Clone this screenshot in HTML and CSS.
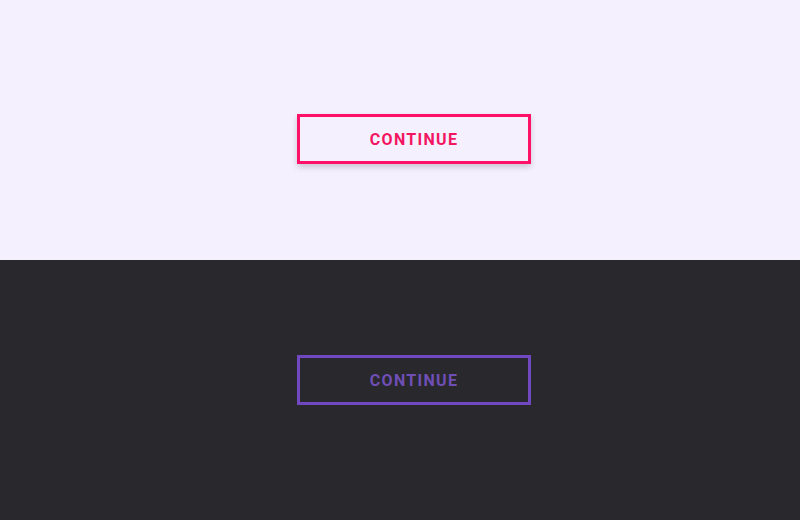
FILE: index.html
```html
<!DOCTYPE html>
<html lang="en">
<head>
    <meta charset="UTF-8">
    <meta name="viewport" content="width=device-width, initial-scale=1.0">
    <title>Continue buttons</title>
    <link rel="stylesheet" href="styles.css">
</head>
<body>

    <div class="panel light">
        <button class="btn btn-pink">Continue</button>
    </div>

    <div class="panel dark">
        <button class="btn btn-purple">Continue</button>
    </div>

</body>
</html>
```

FILE: styles.css
```css
body {
    font-family: 'Roboto', 'Open Sans', sans-serif;
    margin: 0;
    padding: 0;
}
.panel {
    height: 260px;
    box-sizing: border-box;
    display: flex;
    justify-content: center;
    align-items: flex-start;
    padding-left: 27px;
}
.light {
    background: #f5f0fe;
    padding-top: 114px;
}
.dark {
    background: #29282d;
    padding-top: 95px;
}
.btn {
    width: 234px;
    height: 50px;
    padding: 0 0 0 1px;
    background: transparent;
    border: 3px solid;
    font-family: inherit;
    font-size: 16px;
    font-weight: 700;
    letter-spacing: 1.3px;
    text-transform: uppercase;
    cursor: pointer;
}
.btn-pink {
    color: #f2155f;
    border-color: #ff1168;
    box-shadow: 0 3px 6px rgba(0,0,0,0.18);
}
.btn-purple {
    color: #6f4fb6;
    border-color: #7048c0;
}
```
